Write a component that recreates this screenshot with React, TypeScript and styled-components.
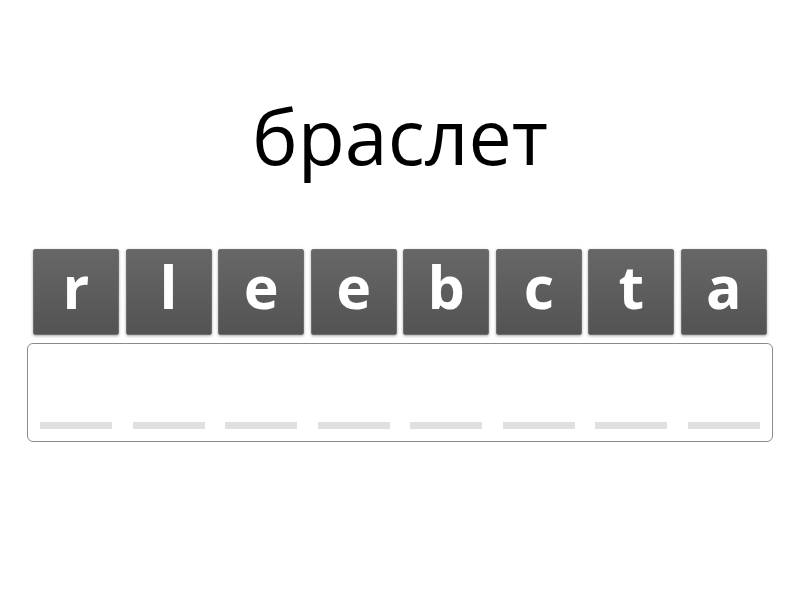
import React from 'react';
import styled, { createGlobalStyle } from 'styled-components';

const GlobalStyle = createGlobalStyle`
  html, body {
    margin: 0;
    padding: 0;
    background: #fff;
  }
  body {
    font-family: "Open Sans", "Noto Sans", sans-serif;
  }
`;

const Page = styled.div`
  width: 800px;
  height: 600px;
  display: flex;
  flex-direction: column;
  align-items: center;
  overflow: hidden;
`;

const Title = styled.h1`
  margin: 96px 0 0;
  font-size: 77px;
  font-weight: 400;
  line-height: 80px;
  color: #000;
`;

const TileRow = styled.div`
  width: 734px;
  margin-top: 73px;
  display: flex;
  justify-content: space-between;
`;

const Tile = styled.div`
  width: 86px;
  height: 86px;
  box-sizing: border-box;
  border: 1px solid #6e6e6e;
  border-radius: 2px;
  background: linear-gradient(#676767, #535353);
  box-shadow: 0 1px 3px rgba(0, 0, 0, 0.35);
  color: #fff;
  font-size: 59px;
  font-weight: 700;
  line-height: 1;
  display: flex;
  align-items: center;
  justify-content: center;
  padding-bottom: 12px;
`;

const AnswerBox = styled.div`
  width: 746px;
  height: 99px;
  margin-top: 8px;
  box-sizing: border-box;
  border: 1.5px solid #8a8a8a;
  border-radius: 6px;
  padding: 0 12px 12px;
  display: flex;
  align-items: flex-end;
  justify-content: space-between;
`;

const Slot = styled.div`
  width: 72px;
  height: 7px;
  background: #e0e0e0;
`;

const letters = ['r', 'l', 'e', 'e', 'b', 'c', 't', 'a'];

const App: React.FC = () => (
  <Page>
    <GlobalStyle />
    <Title>браслет</Title>
    <TileRow>
      {letters.map((l, i) => (
        <Tile key={i}>{l}</Tile>
      ))}
    </TileRow>
    <AnswerBox>
      {letters.map((_, i) => (
        <Slot key={i} />
      ))}
    </AnswerBox>
  </Page>
);

export default App;
